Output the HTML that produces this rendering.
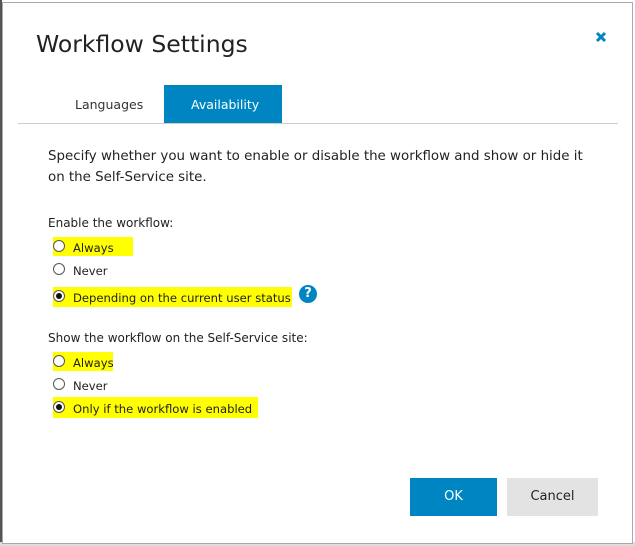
<!DOCTYPE html>
<html><head><style>
body{margin:0;width:635px;height:546px;background:#fff;position:relative;overflow:hidden;font-family:"DejaVu Sans","Liberation Sans",sans-serif;color:#222}
.a{position:absolute}
.dlg{left:2px;top:2px;width:629px;height:540px;border:1px solid #aaa;background:#fff}
.t{font-size:12px;white-space:nowrap}
.rl{font-size:11.6px}
.hl{background:#ffff00;position:absolute}
.r{position:absolute;width:10px;height:10px;border:1px solid #555;border-radius:50%;background:#fff}
.r.on::after{content:"";position:absolute;left:2px;top:2px;width:6px;height:6px;border-radius:50%;background:#111}
</style></head><body>
<div class="a" style="left:0;top:0;width:2px;height:546px;background:#555"></div>
<div class="a" style="left:0;top:542px;width:635px;height:4px;background:#ddd"></div>
<div class="a dlg"></div>
<div class="a" style="left:36px;top:30px;font-size:23.5px;color:#222">Workflow Settings</div>
<svg class="a" style="left:595px;top:31px" width="12" height="12"><path d="M2 2L10 10M10 2L2 10" stroke="#0085c3" stroke-width="3"/></svg>
<div class="a t" style="left:75px;top:97px;color:#333;font-size:12.5px">Languages</div>
<div class="a" style="left:164px;top:85px;width:118px;height:38px;background:#0085c3"></div>
<div class="a t" style="left:191px;top:97px;color:#fff;font-size:12.5px">Availability</div>
<div class="a" style="left:18px;top:123px;width:600px;height:1px;background:#ccc"></div>
<div class="a" style="left:48px;top:146px;font-size:13.4px;line-height:21px;color:#222">Specify whether you want to enable or disable the workflow and show or hide it<br>on the Self-Service site.</div>
<div class="a t" style="left:48px;top:216px">Enable the workflow:</div>
<div class="hl" style="left:53px;top:237px;width:80px;height:19px"></div>
<div class="hl" style="left:53px;top:287px;width:239px;height:20px"></div>
<div class="a t" style="left:48px;top:331px">Show the workflow on the Self-Service site:</div>
<div class="hl" style="left:53px;top:352px;width:60px;height:19px"></div>
<div class="hl" style="left:53px;top:397px;width:205px;height:21px"></div>
<div class="r" style="left:53px;top:240px"></div><div class="a t rl" style="left:73px;top:241px">Always</div>
<div class="r" style="left:53px;top:263px"></div><div class="a t rl" style="left:73px;top:264px">Never</div>
<div class="r on" style="left:53px;top:290px"></div><div class="a t rl" style="left:73px;top:291px">Depending on the current user status</div>
<div class="a" style="left:299px;top:285px;width:18px;height:18px;border-radius:50%;background:#0085c3;color:#fff;font-weight:bold;font-size:13px;text-align:center;line-height:18px">?</div>
<div class="r" style="left:53px;top:355px"></div><div class="a t rl" style="left:73px;top:356px">Always</div>
<div class="r" style="left:53px;top:378px"></div><div class="a t rl" style="left:73px;top:379px">Never</div>
<div class="r on" style="left:53px;top:401px"></div><div class="a t rl" style="left:73px;top:402px">Only if the workflow is enabled</div>
<div class="a" style="left:410px;top:478px;width:87px;height:38px;background:#0085c3;color:#fff;font-size:13px;text-align:center;line-height:38px">OK</div>
<div class="a" style="left:507px;top:478px;width:91px;height:38px;background:#e3e3e3;color:#222;font-size:13px;text-align:center;line-height:38px">Cancel</div>
</body></html>
